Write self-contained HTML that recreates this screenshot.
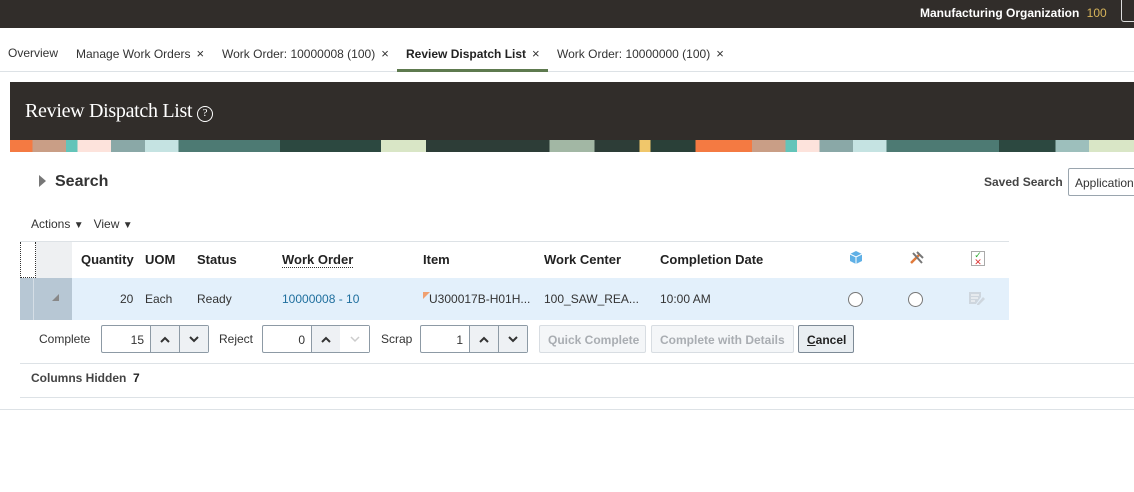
<!DOCTYPE html>
<html><head><meta charset="utf-8"><style>
*{margin:0;padding:0;box-sizing:border-box}
body{width:1134px;height:492px;overflow:hidden;background:#fff;font-family:"Liberation Sans",Arial,sans-serif;font-size:13px;color:#333;position:relative}
.a{position:absolute;white-space:nowrap}
.x{font-size:13px;color:#333;margin-left:6px}
.th{font-weight:bold;color:#222;font-size:13px;top:252px}
.td{top:292px;font-size:12px;color:#333}
.inp{position:absolute;height:28px;border:1px solid #8d9aa5;border-radius:2px;background:#fff;display:flex}
.inp .v{flex:1;text-align:right;padding:7px 6px 0 0;font-size:12px}
.inp .b{width:29px;border-left:1px solid #8d9aa5;background:#eef1f4;display:flex;align-items:center;justify-content:center}
.btn{position:absolute;top:325px;height:28px;border:1px solid #d8dde2;border-radius:2px;background:#f4f6f8;color:#a9adb2;font-weight:bold;font-size:12px;padding:7px 8px 0;white-space:nowrap}
</style></head><body>
<div class="a" style="left:0;top:0;width:1134px;height:28px;background:#312d2a"></div>
<div class="a" style="left:920px;top:6px;color:#fff;font-weight:bold;font-size:12px">Manufacturing Organization <span style="color:#d7b45a;font-weight:normal;margin-left:4px">100</span></div>
<div class="a" style="left:1121px;top:0;width:20px;height:22px;border:1px solid #ddd;border-top:none;border-radius:0 0 0 3px"></div>

<div class="a" style="left:0;top:71px;width:1134px;height:1px;background:#dde2e6"></div>
<div class="a" style="left:397px;top:69px;width:151px;height:3px;background:#5e7a4f"></div>
<div class="a" style="left:8px;top:46px;font-size:12px">Overview</div>
<div class="a" style="left:76px;top:46px;font-size:12px">Manage Work Orders<span class="x">×</span></div>
<div class="a" style="left:222px;top:46px;font-size:12px">Work Order: 10000008 (100)<span class="x">×</span></div>
<div class="a" style="left:406px;top:46px;font-size:12px;font-weight:bold;color:#222">Review Dispatch List<span class="x" style="font-weight:normal">×</span></div>
<div class="a" style="left:557px;top:46px;font-size:12px">Work Order: 10000000 (100)<span class="x">×</span></div>

<div class="a" style="left:10px;top:82px;width:1124px;height:58px;background:#312d2a"></div>
<div class="a" style="left:25px;top:100px;color:#fff;font-family:'Liberation Serif',serif;font-size:20px;letter-spacing:-0.3px">Review Dispatch List <span style="display:inline-block;width:16px;height:16px;border:1.5px solid #fff;border-radius:50%;font-size:11px;text-align:center;line-height:13px;vertical-align:1px;letter-spacing:0">?</span></div>
<div class="a" style="left:10px;top:140px;width:1124px;height:12px;background:linear-gradient(90deg,#f47a42 0 2%,#c99e86 2% 5%,#63c4b9 5% 6%,#fde3dc 6% 9%,#8aa8a7 9% 12%,#c5e3e2 12% 15%,#4d7a73 15% 24%,#2c4840 24% 33%,#d9e6c6 33% 37%,#2d3d37 37% 48%,#a2b7a4 48% 52%,#2d3d37 52% 56%,#f0c76b 56% 57%,#2a4038 57% 61%,#f47a42 61% 66%,#c99e86 66% 69%,#63c4b9 69% 70%,#fde3dc 70% 72%,#8aa8a7 72% 75%,#c5e3e2 75% 78%,#4d7a73 78% 88%,#2c4840 88% 93%,#9dbfbc 93% 96%,#d9e6c6 96%)"></div>

<div class="a" style="left:39px;top:175px;width:0;height:0;border-left:7px solid #777;border-top:6px solid transparent;border-bottom:6px solid transparent"></div>
<div class="a" style="left:55px;top:173px;font-weight:bold;font-size:16px;color:#333">Search</div>
<div class="a" style="left:984px;top:175px;font-weight:bold;font-size:12px;color:#444">Saved Search</div>
<div class="a" style="left:1068px;top:168px;width:70px;height:28px;border:1px solid #9aa5ae;border-radius:2px;padding:7px 0 0 6px;font-size:12px">Application</div>

<div class="a" style="left:31px;top:217px;font-size:12px">Actions <span style="font-size:10px">▼</span>&nbsp;&nbsp; View <span style="font-size:10px">▼</span></div>

<div class="a" style="left:20px;top:241px;width:989px;height:1px;background:#dde2e6"></div>
<div class="a" style="left:20px;top:242px;width:16px;height:36px;border-left:1px dotted #333;border-right:1px dotted #333;border-bottom:1px dotted #333"></div>
<div class="a" style="left:36px;top:242px;width:36px;height:36px;background:#eef0f2"></div>
<div class="a" style="left:20px;top:278px;width:989px;height:42px;background:#e3f0fb"></div>
<div class="a" style="left:20px;top:278px;width:52px;height:42px;background:#b7c7d4"></div>
<div class="a" style="left:33px;top:278px;width:1px;height:42px;background:#d5dee6"></div>
<div class="a" style="left:52px;top:294px;width:0;height:0;border-right:7px solid #888;border-top:7px solid transparent"></div>
<div class="a th" style="left:81px">Quantity</div>
<div class="a th" style="left:145px">UOM</div>
<div class="a th" style="left:197px">Status</div>
<div class="a th" style="left:282px;border-bottom:1px dotted #333">Work Order</div>
<div class="a th" style="left:423px">Item</div>
<div class="a th" style="left:544px">Work Center</div>
<div class="a th" style="left:660px">Completion Date</div>
<svg class="a" style="left:849px;top:250px" width="14" height="15" viewBox="0 0 14 15"><path d="M7 1L13 4V11L7 14L1 11V4Z" fill="#5fb0e6"/><path d="M1 4L7 7L13 4M7 7V14" stroke="#fff" fill="none"/></svg>
<svg class="a" style="left:909px;top:250px" width="16" height="15" viewBox="0 0 16 15"><path d="M2 13L10 5" stroke="#e07a3a" stroke-width="2.5"/><path d="M8 2L14 8M4 3L13 13" stroke="#777" stroke-width="2"/></svg>
<div class="a" style="left:971px;top:251px;width:14px;height:15px;border:1px solid #aaa;font-size:9px;line-height:7px;text-align:center"><span style="color:#3a3">✓</span><br><span style="color:#d33">✕</span></div>

<div class="a td" style="left:120px">20</div>
<div class="a td" style="left:145px">Each</div>
<div class="a td" style="left:197px">Ready</div>
<div class="a td" style="left:282px;color:#1f6f9e">10000008 - 10</div>
<div class="a" style="left:423px;top:292px;width:0;height:0;border-top:7px solid #f0a070;border-right:7px solid transparent"></div>
<div class="a td" style="left:429px">U300017B-H01H...</div>
<div class="a td" style="left:544px">100_SAW_REA...</div>
<div class="a td" style="left:660px">10:00 AM</div>
<div class="a" style="left:848px;top:292px;width:15px;height:15px;border:1px solid #777;border-radius:50%;background:#fff"></div>
<div class="a" style="left:908px;top:292px;width:15px;height:15px;border:1px solid #777;border-radius:50%;background:#fff"></div>
<svg class="a" style="left:968px;top:291px" width="18" height="15" viewBox="0 0 18 15"><path d="M1 1H13V6L8 13H1Z" fill="#ced6de"/><path d="M9 13L15 6L17 8L11 14H9Z" fill="#ced6de"/><path d="M3 4H11M3 7H10M3 10H7" stroke="#fff"/></svg>

<div class="a" style="left:39px;top:332px;font-size:12px">Complete</div>
<div class="inp" style="left:101px;top:325px;width:108px"><div class="v">15</div><div class="b"><svg width="10" height="7"><path d="M1 6L5 2L9 6" stroke="#333" stroke-width="2" fill="none"/></svg></div><div class="b"><svg width="10" height="7"><path d="M1 1L5 5L9 1" stroke="#333" stroke-width="2" fill="none"/></svg></div></div>
<div class="a" style="left:219px;top:332px;font-size:12px">Reject</div>
<div class="inp" style="left:262px;top:325px;width:108px"><div class="v">0</div><div class="b"><svg width="10" height="7"><path d="M1 6L5 2L9 6" stroke="#333" stroke-width="2" fill="none"/></svg></div><div class="b" style="background:#fff;border-left:0"><svg width="10" height="7"><path d="M1 1L5 5L9 1" stroke="#ccc" stroke-width="1.5" fill="none"/></svg></div></div>
<div class="a" style="left:381px;top:332px;font-size:12px">Scrap</div>
<div class="inp" style="left:420px;top:325px;width:108px"><div class="v">1</div><div class="b"><svg width="10" height="7"><path d="M1 6L5 2L9 6" stroke="#333" stroke-width="2" fill="none"/></svg></div><div class="b"><svg width="10" height="7"><path d="M1 1L5 5L9 1" stroke="#333" stroke-width="2" fill="none"/></svg></div></div>
<div class="btn" style="left:539px;width:107px">Quick Complete</div>
<div class="btn" style="left:651px;width:143px">Complete with Details</div>
<div class="btn" style="left:798px;width:56px;border-color:#7d8a96;background:#e9eef2;color:#222"><u>C</u>ancel</div>

<div class="a" style="left:20px;top:363px;width:1114px;height:1px;background:#dde2e6"></div>
<div class="a" style="left:31px;top:371px;font-size:12px;font-weight:bold;color:#444">Columns Hidden&nbsp; <span style="color:#222">7</span></div>
<div class="a" style="left:20px;top:397px;width:1114px;height:1px;background:#dde2e6"></div>
<div class="a" style="left:0;top:409px;width:1134px;height:1px;background:#dde2e6"></div>
</body></html>
